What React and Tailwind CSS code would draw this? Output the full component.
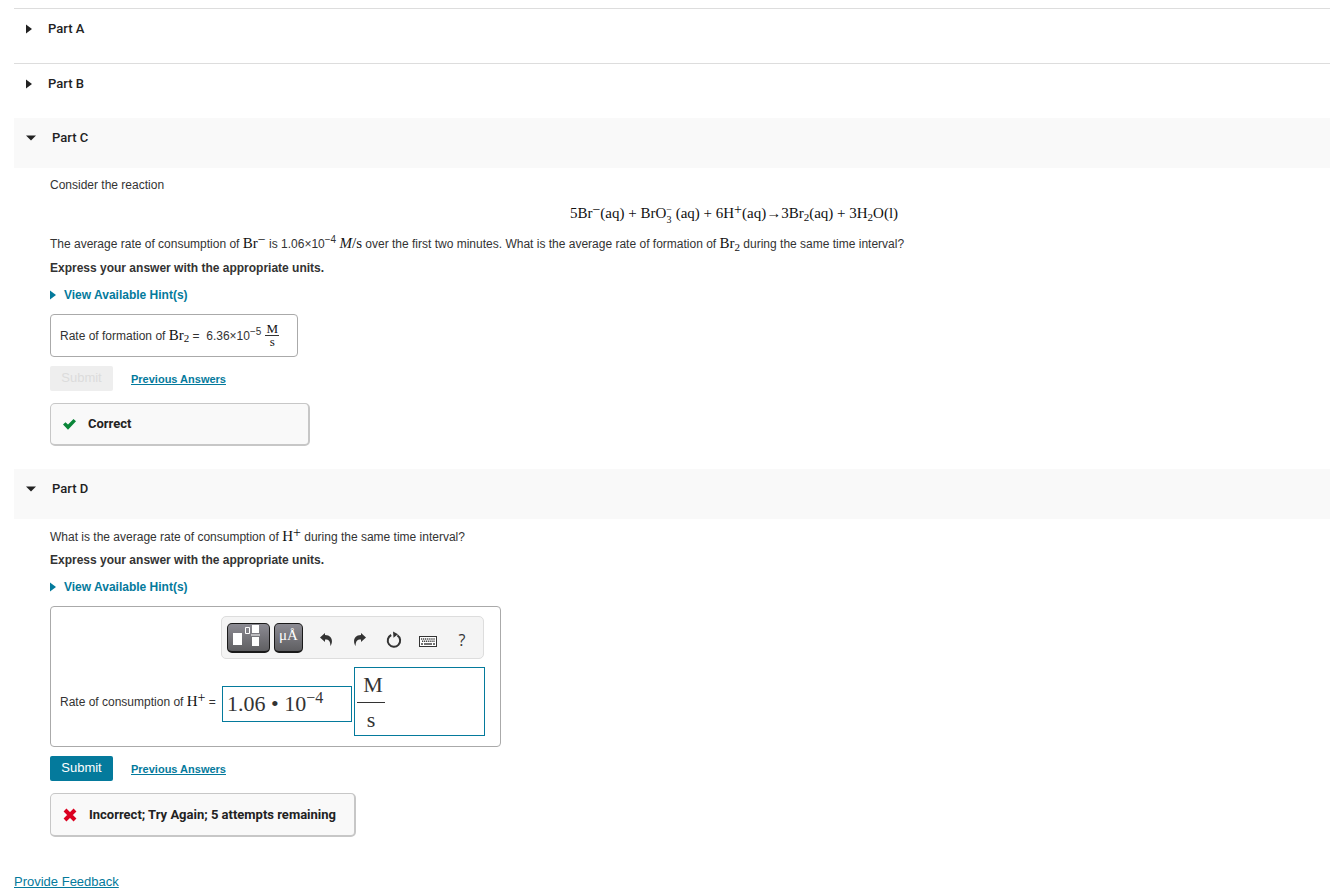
const Caret = ({ open }) => (
  <svg
    viewBox={open ? "0 0 10 6" : "0 0 6 10"}
    className={`${open ? "w-2.5 h-1.5" : "w-1.5 h-2.5"} shrink-0 fill-current`}
    aria-hidden="true"
  >
    <path d={open ? "M0 0.5H10L5 5.5Z" : "M0 0.5L6 5L0 9.5Z"} />
  </svg>
);

const M = ({ children }) => (
  <span className="font-['Liberation_Serif',serif] text-[15px] leading-none text-[#111]">{children}</span>
);

const Sup = ({ children }) => <sup className="text-[10px]">{children}</sup>;
const Sub = ({ children }) => <sub className="text-[11px]">{children}</sub>;

const Charge = ({ children }) => <sup className="text-[14px] top-[-4px]">{children}</sup>;

const ClosedPart = ({ title }) => (
  <h2 className="h-[55px] border-t border-[#ddd]">
    <button
      type="button"
      className="flex items-center gap-4 pl-3 pt-[10px] font-['Roboto',sans-serif] text-[13px] leading-5 font-medium"
    >
      <Caret />
      {title}
    </button>
  </h2>
);

const OpenPart = ({ title, children }) => (
  <section>
    <h2 className="h-[50px] bg-[#f9f9f9]">
      <button
        type="button"
        className="flex items-center gap-4 pl-3 pt-[10px] font-['Roboto',sans-serif] text-[13px] leading-5 font-medium"
      >
        <Caret open />
        {title}
      </button>
    </h2>
    <div className="pl-9 pt-[7px] text-[12px] leading-5 text-[#333]">{children}</div>
  </section>
);

const Hints = () => (
  <button type="button" className="mt-[7px] flex items-center gap-2 font-bold text-[#047a9c]">
    <Caret />
    View Available Hint(s)
  </button>
);

const Actions = ({ disabled }) => (
  <div className="mt-[9px] flex items-center gap-[18px]">
    <button
      type="button"
      disabled={disabled}
      className="h-[25px] w-[63px] rounded-xs bg-[#047a9c] pb-0.5 text-[13px] leading-5 text-white disabled:bg-[#eee] disabled:text-[#dcdcdc]"
    >
      Submit
    </button>
    <a href="#answers" className="text-[11px] font-bold text-[#047a9c] underline">
      Previous Answers
    </a>
  </div>
);

const Feedback = ({ icon, className, children }) => (
  <div
    role="status"
    className={`mt-3 flex w-fit items-center gap-3 rounded-[5px] border border-r-2 border-b-2 border-[#c7c7c7] bg-[#f9f9f9] px-3 font-['Roboto',sans-serif] text-[13px] font-bold text-[#222] ${className}`}
  >
    {icon}
    {children}
  </div>
);

const CheckIcon = () => (
  <svg viewBox="0 0 13 11" className="w-[13px] h-[11px] fill-[#0a8639]" aria-hidden="true">
    <path d="M0 5.6L2.5 3.2L5 5.4L10.5 0L13 2.3L5 10.8Z" />
  </svg>
);

const CrossIcon = () => (
  <svg viewBox="0 0 14 14" className="w-3.5 h-3.5 stroke-[#db0020] stroke-[4]" aria-hidden="true">
    <path d="M2 2L12 12M12 2L2 12" />
  </svg>
);

const TemplateIcon = () => (
  <svg viewBox="0 0 41 28" className="w-[41px] h-[28px]" aria-hidden="true">
    <path d="M5 9H14V21H5ZM24 1H31V9H24ZM24 13H31V22H24ZM23 10.4H32V11.6H23Z" fill="#fff" />
    <path d="M17.5 3.5H21.5V9.5H17.5Z" fill="none" stroke="#fff" />
  </svg>
);

const TurnIcon = ({ className = "" }) => (
  <svg viewBox="0 0 12 13" className={`w-3 h-[13px] fill-[#333] ${className}`} aria-hidden="true">
    <path d="M5 0L0 4.5L5 9V6.6C8.5 6.4 10.4 8 10.4 13C13 9.5 13 2.3 5 2Z" />
  </svg>
);

const ResetIcon = () => (
  <svg viewBox="0 0 16 17" className="w-4 h-[17px]" aria-hidden="true">
    <path d="M5.2 4A6.2 6.2 0 1 0 11.4 4.4" fill="none" stroke="#333" strokeWidth="2" />
    <path d="M7 0.5L12 3.2L7.5 6.8Z" fill="#333" />
  </svg>
);

const KeyboardIcon = () => (
  <svg viewBox="0 0 18 11" className="w-[18px] h-[11px]" aria-hidden="true">
    <rect x="0.5" y="0.5" width="17" height="10" fill="#fff" stroke="#333" />
    <path d="M2 3H16M3 5.2H16" stroke="#444" strokeWidth="1.4" strokeDasharray="1.2 0.7" />
    <path d="M2 8H4M5 8H13M14 8H16" stroke="#444" strokeWidth="1.4" />
  </svg>
);

const DARK_BUTTON =
  "h-[30px] rounded-[5px] border border-b-2 border-[#1a1a1a] bg-linear-to-b from-[#8c8b93] to-[#5f5f62] text-white";
const ICON_BUTTON = "flex h-6 w-[34px] items-center justify-center";

const Toolbar = () => (
  <div
    role="toolbar"
    className="flex h-[43px] w-[263px] items-center gap-1 rounded-[5px] border border-[#ddd] bg-[#f4f4f4] pl-[5px]"
  >
    <button type="button" aria-label="Templates" className={`w-[43px] ${DARK_BUTTON}`}>
      <TemplateIcon />
    </button>
    <button
      type="button"
      aria-label="Units"
      className={`w-[29px] pb-1 font-['Liberation_Serif',serif] text-[15px] leading-5 ${DARK_BUTTON}`}
    >
      μÅ
    </button>
    <div className="flex pt-1 pl-0.5">
      <button type="button" aria-label="Undo" className={ICON_BUTTON}>
        <TurnIcon />
      </button>
      <button type="button" aria-label="Redo" className={ICON_BUTTON}>
        <TurnIcon className="-scale-x-100" />
      </button>
      <button type="button" aria-label="Reset" className={ICON_BUTTON}>
        <ResetIcon />
      </button>
      <button type="button" aria-label="Keyboard" className={`pt-1 ${ICON_BUTTON}`}>
        <KeyboardIcon />
      </button>
      <button
        type="button"
        aria-label="Help"
        className={`font-['Open_Sans',sans-serif] text-[16px] text-[#333] ${ICON_BUTTON}`}
      >
        ?
      </button>
    </div>
  </div>
);

const App = () => (
  <main className="bg-white pt-2 pl-3.5 font-['Liberation_Sans',Arial,sans-serif] text-[#222]">
    <ClosedPart title="Part A" />
    <ClosedPart title="Part B" />

    <OpenPart title="Part C">
      <p>Consider the reaction</p>
      <p className="mt-[9px] h-5 pl-[88px] text-center">
        <M>
          5Br<Charge>−</Charge>(aq) + BrO
          <span className="inline-flex flex-col align-middle text-[10px] leading-[10px]">
            <span>−</span>
            <span>3</span>
          </span>{" "}
          (aq) + 6H<Charge>+</Charge>(aq)→3Br<Sub>2</Sub>(aq) + 3H<Sub>2</Sub>O(l)
        </M>
      </p>
      <p className="mt-2.5">
        The average rate of consumption of <M>Br<Charge>−</Charge></M> is 1.06×10<Sup>−4</Sup>{" "}
        <M><i>M</i>/s</M> over the first two minutes. What is the average rate of formation of{" "}
        <M>Br<Sub>2</Sub></M> during the same time interval?
      </p>
      <p className="mt-1 font-bold">Express your answer with the appropriate units.</p>
      <Hints />
      <div className="mt-[9px] flex h-[43px] w-[248px] items-center rounded-[4px] border border-[#aaa] pl-[9px]">
        <span>
          Rate of formation of <M>Br<Sub>2</Sub></M> = &nbsp;6.36×10<Sup>−5</Sup>
        </span>
        <span className="ml-1 flex flex-col items-center font-['Liberation_Serif',serif] text-[13px] leading-3 text-[#111]">
          <span className="border-b border-[#333] px-px">M</span>
          <span>s</span>
        </span>
      </div>
      <Actions disabled />
      <Feedback icon={<CheckIcon />} className="h-[43px] min-w-[260px]">
        Correct
      </Feedback>
    </OpenPart>

    <div className="h-[23px]" />

    <OpenPart title="Part D">
      <p className="pt-px">
        What is the average rate of consumption of <M>H<Charge>+</Charge></M> during the same time interval?
      </p>
      <p className="mt-[3px] font-bold">Express your answer with the appropriate units.</p>
      <Hints />
      <div className="mt-[9px] w-[451px] rounded-[4px] border border-[#aaa] pt-[9px] pb-2.5">
        <div className="pl-[170px]">
          <Toolbar />
        </div>
        <div className="mt-2 flex items-center">
          <span id="rate-label" className="w-[171px] pl-[9px]">
            Rate of consumption of <M>H<Charge>+</Charge></M> =
          </span>
          <div
            role="textbox"
            tabIndex={0}
            aria-labelledby="rate-label"
            className="mt-1 h-9 w-[130px] border border-[#047a9c] pl-1 font-['Liberation_Serif',serif] text-[22px] leading-[34px]"
          >
            1.06 • 10<sup className="text-[16px]">−4</sup>
          </div>
          <div
            role="textbox"
            tabIndex={0}
            aria-label="Units"
            className="ml-0.5 h-[69px] w-[131px] border border-[#047a9c] px-0.5 font-['Liberation_Serif',serif] text-[22px]"
          >
            <div className="w-7 border-b border-[#333] pl-1 text-center leading-[34px]">M</div>
            <div className="w-7 text-center leading-[34px]">s</div>
          </div>
        </div>
      </div>
      <Actions />
      <Feedback icon={<CrossIcon />} className="h-11 min-w-[306px]">
        Incorrect; Try Again; 5 attempts remaining
      </Feedback>
    </OpenPart>

    <footer className="mt-[35px] text-[13px] leading-5">
      <a href="#feedback" className="text-[#047a9c] underline">
        Provide Feedback
      </a>
    </footer>
  </main>
);

export default App;
